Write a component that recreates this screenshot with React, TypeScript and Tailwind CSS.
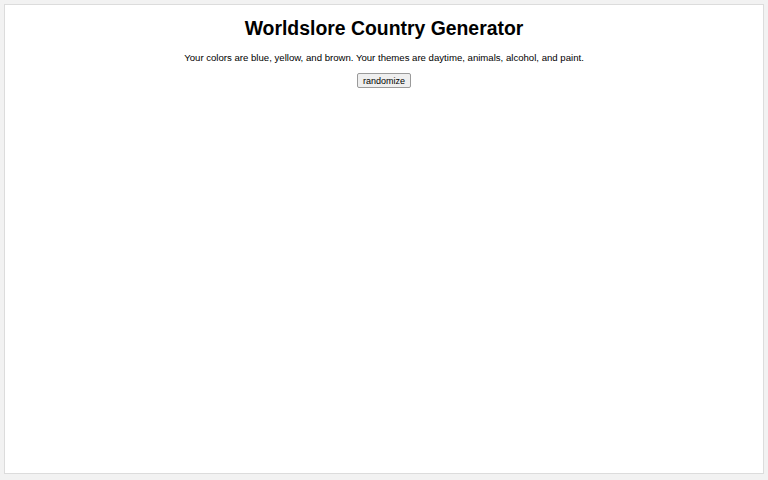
export default function App() {
  return (
    <div className="h-[480px] w-[768px] bg-[#f2f2f2] p-[4px]" style={{ fontFamily: '"Liberation Sans", Arial, sans-serif' }}>
      <div className="flex h-[470px] flex-col items-center border border-[#dcdcdc] bg-white pt-[11px] text-black">
        <h1 className="text-[19.4px] font-bold leading-[24px]">Worldslore Country Generator</h1>
        <p className="mt-[12px] text-[9.6px] leading-[12px]">
          Your colors are blue, yellow, and brown. Your themes are daytime, animals, alcohol, and paint.
        </p>
        <button className="mt-[9px] h-[15px] rounded-[2px] border border-[#9a9a9a] bg-[#efefef] px-[5px] text-[9px] leading-[12px]">
          randomize
        </button>
      </div>
    </div>
  );
}
